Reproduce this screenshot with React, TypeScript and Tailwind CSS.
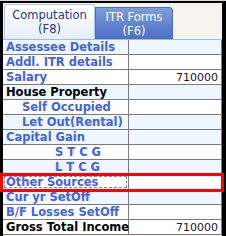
import type { JSX } from 'react';

interface Row {
  label: string;
  value?: string;
  shaded?: boolean;
  heading?: boolean;
  indent?: 'none' | 'one' | 'two';
  focused?: boolean;
}

const rows: Row[] = [
  { label: 'Assessee Details', shaded: true },
  { label: 'Addl. ITR details' },
  { label: 'Salary', value: '710000' },
  { label: 'House Property', heading: true, shaded: true },
  { label: 'Self Occupied', indent: 'one' },
  { label: 'Let Out(Rental)', indent: 'one', shaded: true },
  { label: 'Capital Gain', shaded: true },
  { label: 'S T C G', indent: 'two' },
  { label: 'L T C G', indent: 'two', shaded: true },
  { label: 'Other Sources', focused: true },
  { label: 'Cur yr SetOff', shaded: true },
  { label: 'B/F Losses SetOff' },
  { label: 'Gross Total Income', heading: true, value: '710000' },
];

const indentClass = {
  none: 'pl-[3px]',
  one: 'pl-[19px]',
  two: 'pl-[52px]',
};

export default function App(): JSX.Element {
  return (
    <div className="relative h-[236px] w-[226px] overflow-hidden bg-[#d8d8d8] pt-px font-['DejaVu_Sans',sans-serif]">
      <div className="flex h-[235px] flex-col border-l-[3px] border-r-[4px] border-t-[2px] border-black bg-[#f4f3ee]">
        {/* tabs */}
        <div className="flex h-[37px] items-end border-b border-[#9dbbe9] pl-px">
          <div className="flex h-[35px] w-[91px] flex-col items-center justify-center rounded-t-[3px] border border-b-0 border-[#b4c6e0] bg-gradient-to-b from-white to-[#e6eefa] text-[11.5px] leading-[14px] text-[#1d3a86]">
            <span>Computation</span>
            <span>(F8)</span>
          </div>
          <div className="flex h-[32px] w-[78px] flex-col items-center justify-center rounded-tr-[4px] border border-b-0 border-[#4d6fb8] bg-gradient-to-b from-[#7f9ddb] to-[#4b6fc3] text-[11.5px] leading-[14px] text-white">
            <span>ITR Forms</span>
            <span>(F6)</span>
          </div>
        </div>

        {/* grid */}
        <div className="flex flex-col bg-white">
          {rows.map((row) => (
            <div
              key={row.label}
              className={`flex h-[15px] border-b border-[#7c7c7c] ${row.shaded ? 'bg-[#eef6ff]' : 'bg-white'}`}
            >
              <div
                className={`relative flex w-[126px] items-center whitespace-nowrap border-r border-[#7c7c7c] pt-px text-[11.5px] font-bold leading-none ${indentClass[row.indent ?? 'none']} ${row.heading ? 'text-black' : 'text-[#3f62ea]'}`}
              >
                {row.focused ? (
                  <span className="absolute inset-x-[1px] inset-y-[1px] border border-dashed border-[#8a8a8a]" />
                ) : null}
                {row.label}
              </div>
              <div className="flex flex-1 items-center justify-end border-r border-[#7c7c7c] pr-[3px] pt-px text-[11px] leading-none text-[#141438]">
                {row.value ?? ''}
              </div>
            </div>
          ))}
        </div>
      </div>

      {/* highlight box */}
      <div className="absolute left-0 top-[173px] h-[19px] w-[224px] border-[3px] border-[#ff0000]" />
    </div>
  );
}
